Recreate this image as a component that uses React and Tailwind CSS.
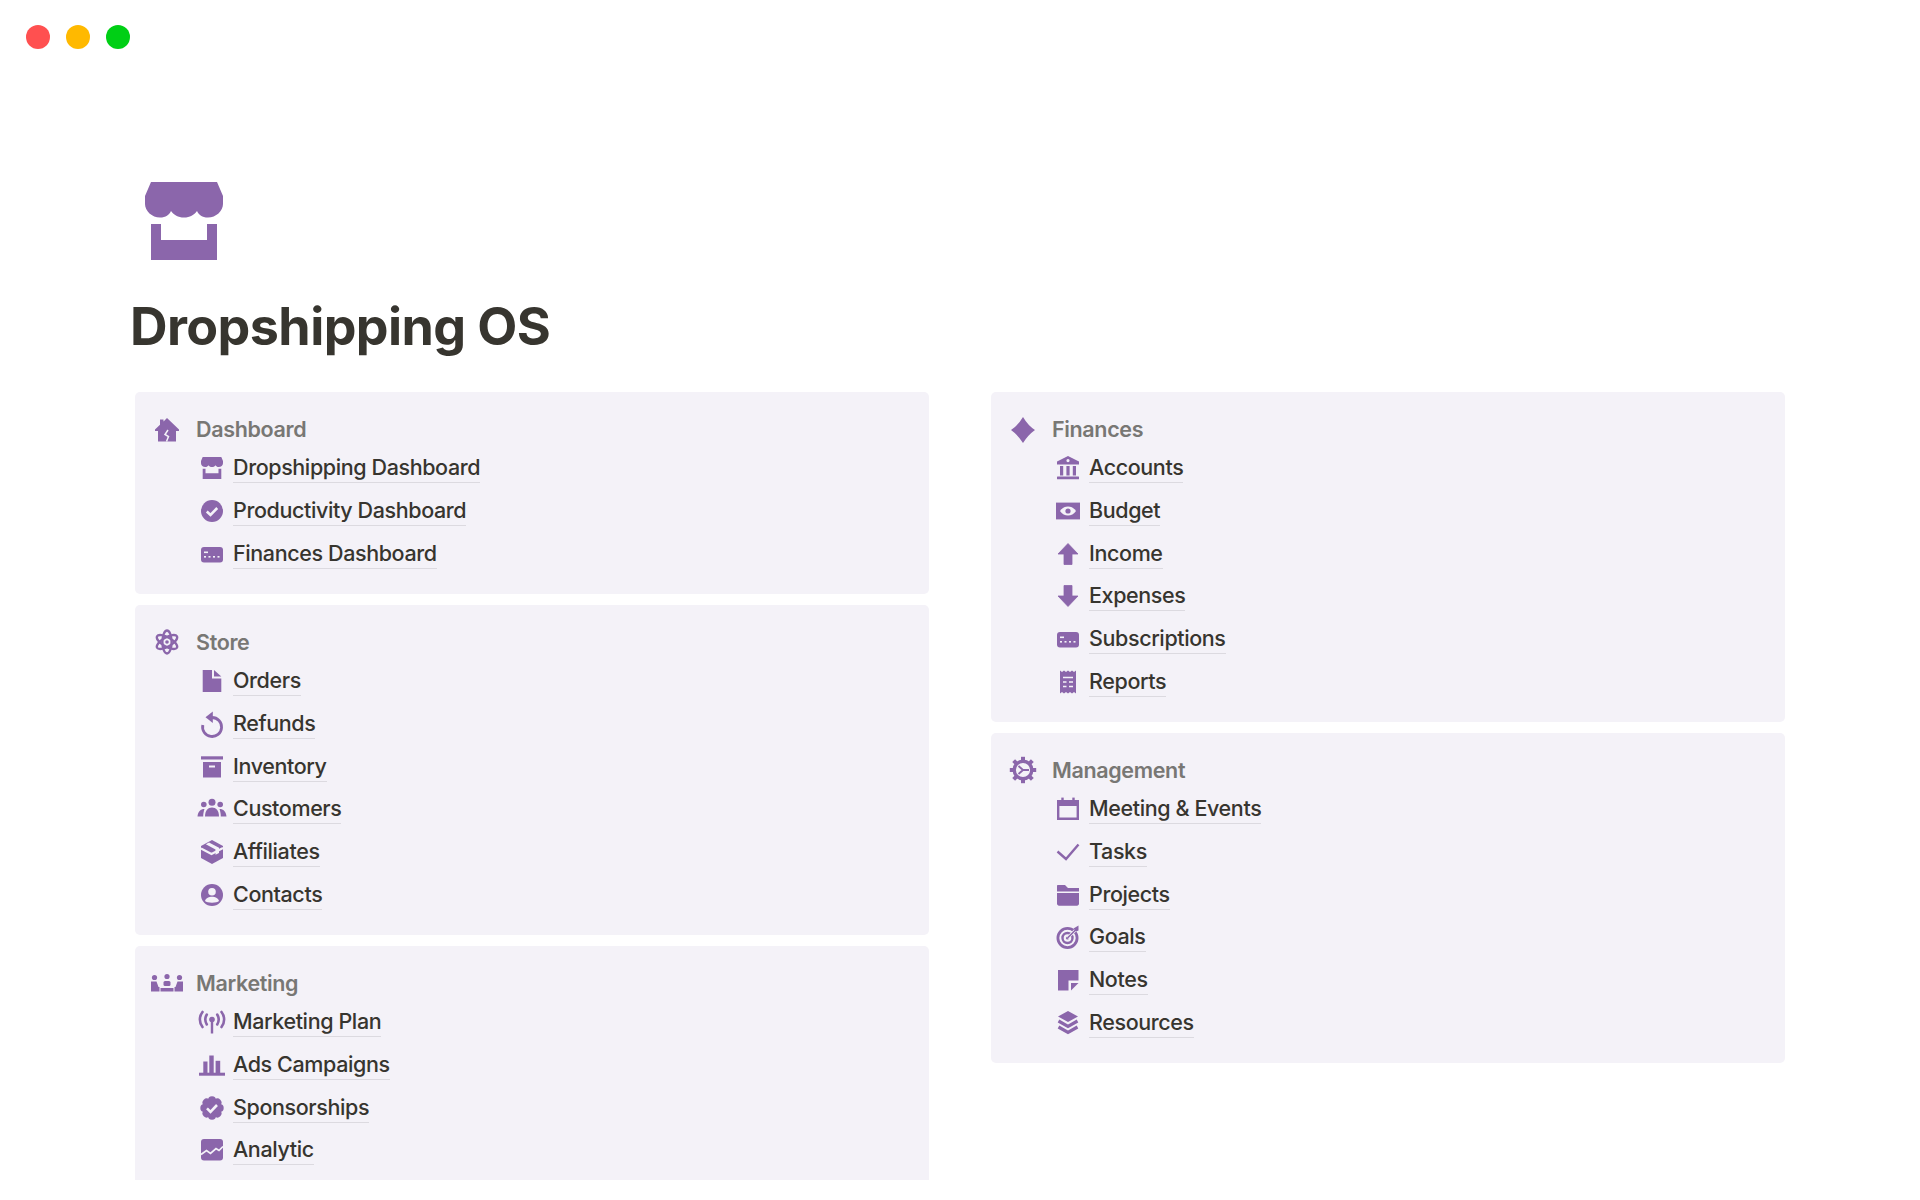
import React from "react";

const PURPLE = "#8b66ab";
const PANEL = "#f4f2f8";

const Card = () => (
  <>
    <rect x="4" y="8" width="22" height="15.5" rx="3" fill={PURPLE} />
    <g fill={PANEL}>
      <rect x="7" y="12.5" width="4" height="1.6" />
      <rect x="7" y="17" width="2" height="1.6" />
      <rect x="11.5" y="17" width="2" height="1.6" />
      <rect x="16" y="17" width="2" height="1.6" />
      <rect x="20.5" y="17" width="2" height="1.6" />
    </g>
  </>
);

const StorePaths = () => (
  <>
    <path d="M6 0H72L78 14V22C78 29 71 35.5 63 35.5C57 35.5 54 33 52 29C49 33 45 35.5 39 35.5C33 35.5 29 33 26 29C24 33 21 35.5 15 35.5C7 35.5 0 29 0 22V14Z" />
    <path d="M6 42H16V58H62V42H72V78H6Z" />
  </>
);

const teeth = [0, 45, 90, 135, 180, 225, 270, 315];
const scallops = [0, 45, 90, 135, 180, 225, 270, 315];

const icons = {
  home: (
    <>
      <path d="M15 3L27 14.5V16H24V26.5H6V16H3V14.5L8 9.7V4.5H11.5V6.4Z" fill={PURPLE} />
      <path d="M16 15L13 19.5L16.5 21.5L14.5 26.5" fill="none" stroke={PANEL} strokeWidth="1.5" />
    </>
  ),
  atom: (
    <g fill="none" stroke={PURPLE} strokeWidth="2.3">
      <ellipse cx="15" cy="15" rx="4.6" ry="11.5" />
      <ellipse cx="15" cy="15" rx="4.6" ry="11.5" transform="rotate(60 15 15)" />
      <ellipse cx="15" cy="15" rx="4.6" ry="11.5" transform="rotate(120 15 15)" />
      <circle cx="15" cy="15" r="1.8" fill={PURPLE} stroke="none" />
    </g>
  ),
  meeting: (
    <g fill={PURPLE}>
      <circle cx="2.5" cy="9.5" r="2.6" />
      <circle cx="15" cy="8.5" r="2.6" />
      <circle cx="27.5" cy="9.5" r="2.6" />
      <path d="M-1 13.5H4.5L6.5 19H7.5V23.5H-1Z" />
      <path d="M31 13.5H25.5L23.5 19H22.5V23.5H31Z" />
      <rect x="11.5" y="13" width="7" height="5" rx="1.5" />
      <rect x="8.5" y="20" width="13" height="3.5" />
    </g>
  ),
  sparkle: <path d="M15 2Q20 10.5 27 15Q20 20 15 28Q10 20 3 15Q10 10.5 15 2Z" fill={PURPLE} />,
  gear: (
    <g fill="none" stroke={PURPLE}>
      <circle cx="15" cy="15" r="8.8" strokeWidth="3.4" />
      {teeth.map((a) => (
        <rect key={a} x="13" y="1.8" width="4" height="4.2" fill={PURPLE} stroke="none" transform={`rotate(${a} 15 15)`} />
      ))}
      <path d="M15 15L10.5 11M15 15L10.5 19M15 15H21" strokeWidth="1.8" />
    </g>
  ),
  store: (
    <g transform="translate(4 4) scale(0.282)" fill={PURPLE}>
      <StorePaths />
    </g>
  ),
  checkCircle: (
    <>
      <circle cx="15" cy="15" r="11" fill={PURPLE} />
      <path d="M9.8 15.5L13.5 19L20.2 12" fill="none" stroke={PANEL} strokeWidth="2.6" />
    </>
  ),
  card: <Card />,
  doc: (
    <g fill={PURPLE}>
      <path d="M5.7 4H15V12.5H24.3V26H5.7Z" />
      <path d="M17 4L24.3 10.5H17Z" />
    </g>
  ),
  refund: (
    <>
      <path d="M15 8.5A9.5 9.5 0 1 1 5.8 16" fill="none" stroke={PURPLE} strokeWidth="2.8" />
      <path d="M15.8 2.5V14L8.5 8.3Z" fill={PURPLE} />
    </>
  ),
  archive: (
    <g fill={PURPLE}>
      <rect x="4" y="4.3" width="22" height="3.2" />
      <path d="M6 10H24V25.5H6ZM12 13.5V15.5H18V13.5Z" fillRule="evenodd" />
    </g>
  ),
  people: (
    <g fill={PURPLE}>
      <circle cx="15" cy="8.3" r="3.5" />
      <circle cx="6.8" cy="10.5" r="2.8" />
      <circle cx="23.2" cy="10.5" r="2.8" />
      <path d="M8 22.5C8 16.5 11 13.5 15 13.5C19 13.5 22 16.5 22 22.5Z" />
      <path d="M0.5 22.5C1 17.5 3.5 15 7.5 15C6.8 17 6.2 19.5 6.2 22.5Z" />
      <path d="M29.5 22.5C29 17.5 26.5 15 22.5 15C23.2 17 23.8 19.5 23.8 22.5Z" />
    </g>
  ),
  box: (
    <>
      <path d="M15 3L26 9V21L15 27L4 21V9Z" fill={PURPLE} />
      <path d="M4 11.5L14.5 17L26 11" fill="none" stroke={PANEL} strokeWidth="2" />
      <path d="M12 5.5L22 10.8V16L18.5 17.8V12.5L8.8 7.3Z" fill={PANEL} />
    </>
  ),
  contact: (
    <>
      <circle cx="15" cy="15" r="11" fill={PURPLE} />
      <circle cx="15" cy="11.8" r="3.8" fill={PANEL} />
      <path d="M8 21C9 17.8 12 16.8 15 16.8C18 16.8 21 17.8 22 21C20 23.2 10 23.2 8 21Z" fill={PANEL} />
    </>
  ),
  antenna: (
    <>
      <circle cx="15" cy="12.5" r="2.8" fill={PURPLE} />
      <rect x="13.8" y="13" width="2.4" height="13.5" fill={PURPLE} />
      <path d="M9.8 7.5C8 10.5 8 14.5 9.8 17.5M20.2 7.5C22 10.5 22 14.5 20.2 17.5M5.5 5C2 9.5 2 15.5 5.5 20M24.5 5C28 9.5 28 15.5 24.5 20" fill="none" stroke={PURPLE} strokeWidth="2.6" strokeLinecap="round" />
    </>
  ),
  bars: (
    <g fill={PURPLE}>
      <rect x="2" y="22.7" width="26" height="3" />
      <rect x="6.3" y="11.5" width="4.2" height="11.5" />
      <rect x="12.3" y="5.5" width="4.4" height="17.5" />
      <rect x="18.6" y="10.8" width="4.6" height="12.2" />
    </g>
  ),
  badge: (
    <>
      <g fill={PURPLE}>
        <circle cx="15" cy="15" r="9.5" />
        {scallops.map((a) => (
          <circle key={a} cx="15" cy="7.3" r="4" transform={`rotate(${a} 15 15)`} />
        ))}
      </g>
      <path d="M10 15.3L13.5 18.8L20 12" fill="none" stroke={PANEL} strokeWidth="2.6" />
    </>
  ),
  chart: (
    <>
      <rect x="4" y="4" width="22" height="21.5" rx="3" fill={PURPLE} />
      <path d="M4 19.5L9.5 15.5L13.5 18.5L19 13.5L22 15.5L26 11.5" fill="none" stroke={PANEL} strokeWidth="1.7" />
    </>
  ),
  bank: (
    <g fill={PURPLE}>
      <path fillRule="evenodd" d="M15 3L26 8.5V11.5H4V8.5ZM15 6A1.6 1.6 0 1 0 15 9.2A1.6 1.6 0 1 0 15 6Z" />
      <rect x="7" y="13" width="3.2" height="9.5" />
      <rect x="13.4" y="13" width="3.2" height="9.5" />
      <rect x="19.8" y="13" width="3.2" height="9.5" />
      <rect x="4" y="23.5" width="22" height="2.7" rx="0.5" />
    </g>
  ),
  bill: (
    <>
      <rect x="3" y="6.6" width="24" height="16.8" fill={PURPLE} />
      <path d="M7 15C9 12 12 10.5 15 10.5C18 10.5 21 12 23 15C21 18 18 19.5 15 19.5C12 19.5 9 18 7 15Z" fill={PANEL} />
      <circle cx="15" cy="15" r="2.6" fill={PURPLE} />
    </>
  ),
  up: <path d="M15 4.5L25 15H19V25.5H11V15H5Z" fill={PURPLE} stroke={PURPLE} strokeWidth="0.8" strokeLinejoin="round" />,
  down: <path d="M15 25.5L25 15H19V4.5H11V15H5Z" fill={PURPLE} stroke={PURPLE} strokeWidth="0.8" strokeLinejoin="round" />,
  receipt: (
    <>
      <path d="M7 3.5L9 5L11 3.5L13 5L15 3.5L17 5L19 3.5L21 5L23 3.5V26.5L21 25L19 26.5L17 25L15 26.5L13 25L11 26.5L9 25L7 26.5Z" fill={PURPLE} />
      <path d="M10 10.5H20M10 15H13.5M16 15H20M10 19.5H13.5M16 19.5H20" fill="none" stroke={PANEL} strokeWidth="1.4" />
    </>
  ),
  calendar: (
    <g fill={PURPLE}>
      <path fillRule="evenodd" d="M4 6H26V26H4ZM6.4 12V23.6H23.6V12Z" />
      <rect x="8.3" y="3.6" width="2.4" height="3" />
      <rect x="19.3" y="3.6" width="2.4" height="3" />
    </g>
  ),
  check: <path d="M4.5 14.5L13 22L25.5 7.5" fill="none" stroke={PURPLE} strokeWidth="2.4" />,
  folder: (
    <g fill={PURPLE}>
      <path d="M4 6C4 5.4 4.4 5 5 5H12L15 8H26V11.5H4Z" />
      <path d="M4 13H26V23.5C26 24.8 25 25.7 24 25.7H6C5 25.7 4 24.8 4 23.5Z" />
    </g>
  ),
  target: (
    <>
      <g fill="none" stroke={PURPLE}>
        <circle cx="14.5" cy="16" r="9.6" strokeWidth="2.8" />
        <circle cx="14.5" cy="16" r="5" strokeWidth="2.4" />
      </g>
      <circle cx="14.5" cy="16" r="1.6" fill={PURPLE} />
      <path d="M14.5 16L24 6.5" stroke={PANEL} strokeWidth="3" />
      <path d="M14.5 16L23 7.5" stroke={PURPLE} strokeWidth="1.6" />
      <path d="M20.5 6.5L25.5 3.5V8.5L23 9.5Z" fill={PURPLE} />
    </>
  ),
  note: (
    <g fill={PURPLE}>
      <path d="M5 5H25.5V15.5H15.5V25.5H5Z" />
      <path d="M18 18H25.5L18 25.5Z" />
    </g>
  ),
  layers: (
    <>
      <path d="M15 3L25 8.5L15 14L5 8.5Z" fill={PURPLE} />
      <path d="M5.5 13L15 18.3L24.5 13M5.5 19L15 24.3L24.5 19" fill="none" stroke={PURPLE} strokeWidth="3.2" />
    </>
  ),
};

const Icon = ({ name }) => (
  <svg viewBox="0 0 30 30" className="w-[30px] h-[30px] shrink-0 overflow-visible">
    {icons[name]}
  </svg>
);

const leftSections = [
  {
    title: "Dashboard",
    icon: "home",
    items: [
      ["store", "Dropshipping Dashboard"],
      ["checkCircle", "Productivity Dashboard"],
      ["card", "Finances Dashboard"],
    ],
  },
  {
    title: "Store",
    icon: "atom",
    items: [
      ["doc", "Orders"],
      ["refund", "Refunds"],
      ["archive", "Inventory"],
      ["people", "Customers"],
      ["box", "Affiliates"],
      ["contact", "Contacts"],
    ],
  },
  {
    title: "Marketing",
    icon: "meeting",
    items: [
      ["antenna", "Marketing Plan"],
      ["bars", "Ads Campaigns"],
      ["badge", "Sponsorships"],
      ["chart", "Analytic"],
    ],
  },
];

const rightSections = [
  {
    title: "Finances",
    icon: "sparkle",
    items: [
      ["bank", "Accounts"],
      ["bill", "Budget"],
      ["up", "Income"],
      ["down", "Expenses"],
      ["card", "Subscriptions"],
      ["receipt", "Reports"],
    ],
  },
  {
    title: "Management",
    icon: "gear",
    items: [
      ["calendar", "Meeting & Events"],
      ["check", "Tasks"],
      ["folder", "Projects"],
      ["target", "Goals"],
      ["note", "Notes"],
      ["layers", "Resources"],
    ],
  },
];

const Section = ({ section }) => (
  <div className="bg-[#f4f2f8] rounded-[5px] pt-[21px] pb-[19px] shrink-0">
    <div className="flex items-center h-[34px] pb-[1px] pl-[17px] gap-[14px]">
      <Icon name={section.icon} />
      <span className="text-[21.5px] font-semibold tracking-[-0.35px] text-[#787774]">{section.title}</span>
    </div>
    {section.items.map(([icon, label]) => (
      <div key={label} className="flex items-center h-[42.67px] pl-[62px] gap-[6px]">
        <Icon name={icon} />
        <span className="text-[21.5px] font-medium leading-[29px] tracking-[-0.39px] text-[#37352f] border-b border-[#dcdae0]">
          {label}
        </span>
      </div>
    ))}
  </div>
);

export default function App() {
  return (
    <div className="w-[1920px] h-[1200px] bg-white overflow-hidden font-['Inter',sans-serif]">
      <div className="flex gap-4 pt-[25px] pl-[26px]">
        <div className="w-6 h-6 rounded-full bg-[#ff5050]" />
        <div className="w-6 h-6 rounded-full bg-[#ffb900]" />
        <div className="w-6 h-6 rounded-full bg-[#00cf15]" />
      </div>
      <svg viewBox="0 0 78 78" className="w-[78px] h-[78px] mt-[133px] ml-[145px]" fill={PURPLE}>
        <StorePaths />
      </svg>
      <h1 className="mt-[32px] ml-[130px] h-[70px] text-[52px] leading-[70px] font-bold tracking-[-0.58px] text-[#37352f]">
        Dropshipping OS
      </h1>
      <div className="flex gap-[62px] mt-[30px] pl-[135px] h-[788px] overflow-hidden">
        <div className="flex flex-col gap-[11px] w-[794px]">
          {leftSections.map((s) => (
            <Section key={s.title} section={s} />
          ))}
        </div>
        <div className="flex flex-col gap-[11px] w-[794px]">
          {rightSections.map((s) => (
            <Section key={s.title} section={s} />
          ))}
        </div>
      </div>
    </div>
  );
}
